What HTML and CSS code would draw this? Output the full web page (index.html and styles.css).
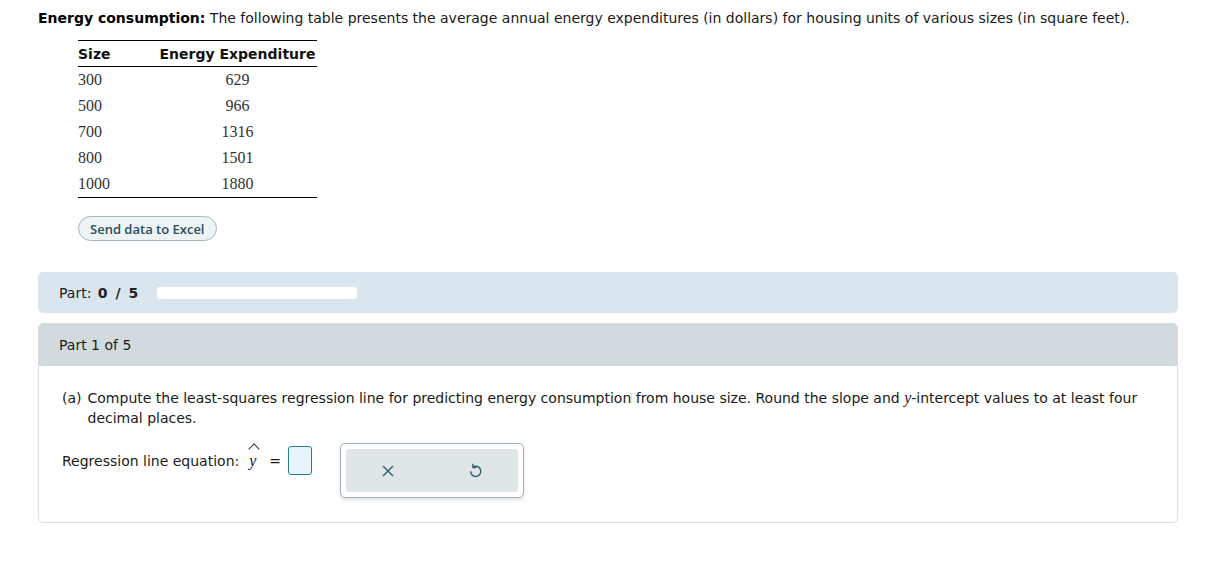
FILE: index.html
```html
<!DOCTYPE html>
<html lang="en">
<head>
    <meta charset="UTF-8">
    <title>Energy consumption</title>
    <link rel="stylesheet" href="styles.css">
</head>
<body>
    <div class="page">
        <p class="intro"><strong>Energy consumption:</strong> The following table presents the average annual energy expenditures (in dollars) for housing units of various sizes (in square feet).</p>

        <table class="data">
            <thead>
                <tr><th class="c1">Size</th><th class="c2">Energy Expenditure</th></tr>
            </thead>
            <tbody>
                <tr><td class="c1">300</td><td class="c2">629</td></tr>
                <tr><td class="c1">500</td><td class="c2">966</td></tr>
                <tr><td class="c1">700</td><td class="c2">1316</td></tr>
                <tr><td class="c1">800</td><td class="c2">1501</td></tr>
                <tr><td class="c1">1000</td><td class="c2">1880</td></tr>
            </tbody>
        </table>

        <button class="excel-btn">Send data to Excel</button>

        <div class="progress">
            <span>Part: <b>0 / 5</b></span>
            <div class="bar"></div>
        </div>

        <div class="card">
            <div class="card-head">Part 1 of 5</div>
            <div class="card-body">
                <div class="question">
                    <span class="qlabel">(a)</span>
                    <span>Compute the least-squares regression line for predicting energy consumption from house size. Round the slope and <i class="math">y</i>-intercept values to at least four decimal places.</span>
                </div>
                <div class="answer">
                    <div class="equation">
                        <span>Regression line equation:</span>
                        <span class="yhat">y</span>
                        <span class="eq">=</span>
                        <span class="box"></span>
                    </div>
                    <div class="tools">
                        <div class="tools-inner">
                            <svg width="14" height="14" viewBox="0 0 14 14"><path d="M2 2 L12 12 M12 2 L2 12" stroke="#3d6473" stroke-width="1.5" fill="none"/></svg>
                            <svg width="15" height="17" viewBox="0 0 14 16"><path d="M4.2 5 A4.8 4.8 0 1 1 2.4 8.8" stroke="#3d6473" stroke-width="1.4" fill="none"/><path d="M4.6 1.6 L4.6 5.2 L8 5.2" stroke="#3d6473" stroke-width="1.4" fill="none"/></svg>
                        </div>
                    </div>
                </div>
            </div>
        </div>
    </div>
</body>
</html>
```

FILE: styles.css
```css
body { margin: 0; font-family: "DejaVu Sans", Verdana, sans-serif; font-size: 14px; color: #1a1a1a; background: #fff; }
.page { padding: 10px 34px 0 38px; }
.intro { margin: 0 0 13px 0; line-height: 17px; }
.intro strong { color: #000; }

.data { border-collapse: collapse; margin-left: 40px; border-top: 1px solid #000; border-bottom: 1px solid #000; }
.data th { font-size: 14px; font-weight: bold; color: #111; padding: 5px 0 3px; border-bottom: 1px solid #000; line-height: 17px; }
.data td { font-family: "Liberation Serif", "Times New Roman", serif; font-size: 16px; color: #333; height: 26px; padding: 0; line-height: 26px; }
.data .c1 { text-align: left; width: 80px; }
.data .c2 { text-align: center; width: 159px; }

.excel-btn { display: block; margin: 18px 0 0 40px; height: 25px; padding: 0 11px; border: 1px solid #a3b8c0; border-radius: 13px; background: #eef3f5; color: #284e5e; font-family: "Open Sans", "Noto Sans", sans-serif; font-weight: 600; font-size: 13px; }

.progress { margin-top: 31px; height: 41px; background: #dae6ef; border-radius: 5px; display: flex; align-items: center; padding-left: 21px; gap: 19px; }
.progress b { color: #222; word-spacing: 3px; margin-left: 2px; }
.progress .bar { width: 200px; height: 12px; background: #fff; border-radius: 3px; }

.card { margin-top: 10px; border: 1px solid #d6dee1; border-radius: 5px; overflow: hidden; }
.card-head { background: #d2dadd; height: 42px; line-height: 42px; padding-left: 20px; }
.card-body { padding: 22px 23px 24px 23px; }
.question { display: flex; gap: 6px; line-height: 20px; }
.qlabel { flex: none; }
.math { font-family: "Liberation Serif", serif; font-size: 16px; line-height: 1; }
.answer { margin-top: 15px; display: flex; align-items: flex-start; }
.equation { display: flex; align-items: center; height: 29px; margin-top: 3px; }
.yhat { font-family: "Liberation Serif", serif; font-style: italic; font-size: 16px; margin-left: 10px; position: relative; }
.yhat::before { content: ""; position: absolute; left: 1px; top: -7px; width: 7px; height: 7px; border-left: 1.3px solid #333; border-top: 1.3px solid #333; transform: rotate(45deg); }
.eq { margin-left: 13px; font-size: 14px; }
.box { width: 22px; height: 27px; margin-left: 7px; background: #e6f3f8; border: 1.5px solid #2a7f8f; border-radius: 3px; }
.tools { margin-left: 28px; padding: 5px; border: 1px solid #9fb4bc; border-radius: 5px; background: #fff; box-shadow: 0 2px 4px rgba(0,0,0,0.12); }
.tools-inner { width: 172px; height: 43px; background: #e0e6e8; border-radius: 3px; display: flex; align-items: center; justify-content: space-between; padding: 0 35px; box-sizing: border-box; }
```
